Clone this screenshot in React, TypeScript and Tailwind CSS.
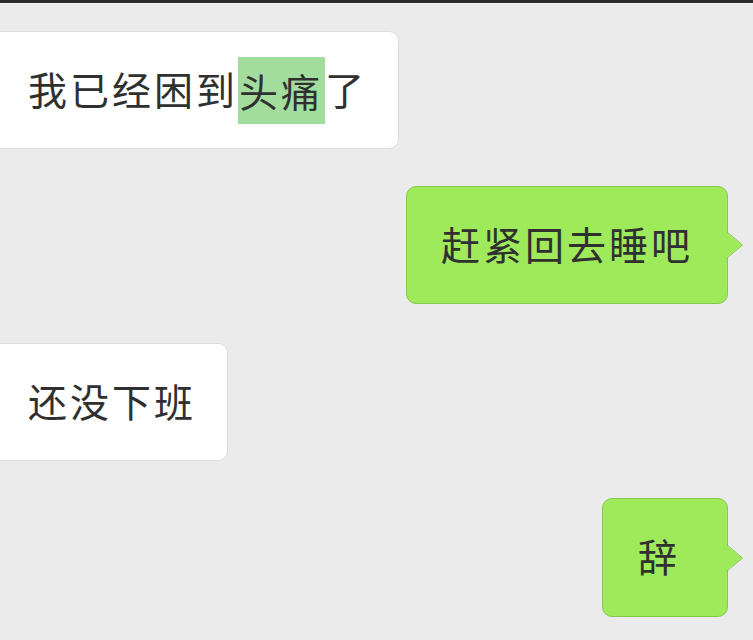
import React from 'react';

const font = { fontFamily: '"Noto Sans CJK SC", "Noto Sans", sans-serif' };

const Tail: React.FC = () => (
  <svg
    className="absolute right-[-17px] top-1/2 -translate-y-1/2"
    width="18"
    height="30"
    viewBox="0 0 18 30"
  >
    <path d="M0 2 L16 15 L0 28 Z" fill="#9eea5a" />
    <path d="M0.5 1.5 L16.5 15 L0.5 28.5" fill="none" stroke="#86c94f" strokeWidth="1" />
  </svg>
);

const App: React.FC = () => {
  return (
    <div className="w-[753px] h-[640px] overflow-hidden bg-[#ebebeb] text-[#303030]" style={font}>
      <div className="h-[3px] bg-[#2a2a2a]" />
      <div className="h-[1px] bg-[#f4f4f2]" />

      <div className="flex flex-col pt-[27px]">
        {/* incoming */}
        <div className="flex">
          <div className="-ml-[12px] h-[118px] w-[411px] flex items-center pl-[39px] pb-[4px] bg-white rounded-[10px] border border-[#dcdcdc] text-[39px] tracking-[3px] leading-none whitespace-nowrap">
            <span>我已经困到</span>
            <span className="inline-flex items-center h-[67px] mt-[4px] pl-[1px] pr-[2px] bg-[#a3dd9e]">头痛</span>
            <span>了</span>
          </div>
        </div>

        {/* outgoing */}
        <div className="flex justify-end mt-[37px] pr-[25px]">
          <div className="relative h-[118px] w-[322px] flex items-center pl-[34px] pb-[4px] bg-[#9eea5a] rounded-[10px] border border-[#86c94f] text-[39px] tracking-[3px] leading-none whitespace-nowrap">
            赶紧回去睡吧
            <Tail />
          </div>
        </div>

        {/* incoming */}
        <div className="flex mt-[39px]">
          <div className="-ml-[12px] h-[118px] w-[240px] flex items-center pl-[39px] pb-[4px] bg-white rounded-[10px] border border-[#dcdcdc] text-[39px] tracking-[3px] leading-none whitespace-nowrap">
            还没下班
          </div>
        </div>

        {/* outgoing */}
        <div className="flex justify-end mt-[37px] pr-[25px]">
          <div className="relative h-[119px] w-[126px] flex items-center pl-[35px] pb-[4px] bg-[#9eea5a] rounded-[10px] border border-[#86c94f] text-[39px] tracking-[3px] leading-none whitespace-nowrap">
            辞
            <Tail />
          </div>
        </div>
      </div>
    </div>
  );
};

export default App;
